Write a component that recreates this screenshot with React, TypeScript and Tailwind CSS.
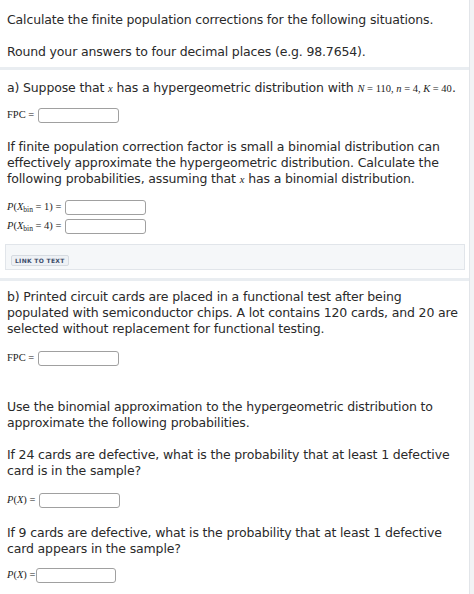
import React from "react";

const font = { fontFamily: '"DejaVu Sans", Verdana, sans-serif' };

function Box({ w = 81 }: { w?: number }) {
  return (
    <span
      className="inline-block h-[15px] shrink-0 rounded-[3px] border border-[#a0a0a0] bg-white"
      style={{ width: w }}
    />
  );
}

function M({ children }: { children: React.ReactNode }) {
  return (
    <span
      className="text-[10.5px] leading-none tracking-normal text-[#222]"
      style={{ fontFamily: '"Liberation Serif", "Times New Roman", serif' }}
    >
      {children}
    </span>
  );
}

export default function App() {
  return (
    <div className="flex min-h-[594px] w-[474px] bg-[#f2f3f5]" style={font}>
      <div className="flex w-[470px] flex-col gap-[3px] border-r border-[#e2e5e9] bg-[#e9edf1] text-[12.5px] leading-[16px] tracking-[-0.15px] text-[#2a2a2a]">
        <div className="h-[67px] bg-white px-[7px] pt-[12px]">
          <p>Calculate the finite population corrections for the following situations.</p>
          <p className="mt-[16px]">Round your answers to four decimal places (e.g. 98.7654).</p>
        </div>
        <div className="bg-white px-[7px] pt-[10px] pb-[8px]">
          <p className="h-[16px] whitespace-nowrap">
            a) Suppose that <M><i>x</i></M> has a hypergeometric distribution with{" "}
            <M>
              <i>N</i> = 110, <i>n</i> = 4, <i>K</i> = 40
            </M>
            .
          </p>
          <div className="mt-[12px] flex h-[15px] items-center gap-[4px]">
            <M>FPC =</M>
            <Box w={81} />
          </div>
          <p className="mt-[16px]">
            If finite population correction factor is small a binomial distribution can effectively approximate the
            hypergeometric distribution. Calculate the following probabilities, assuming that{" "}
            <M>
              <i>x</i>
            </M>{" "}
            has a binomial distribution.
          </p>
          <div className="mt-[13px] flex h-[15px] items-center gap-[4px]">
            <M>
              <i>P</i>(<i>X</i>
              <sub className="text-[7.5px] leading-none">bin</sub> = 1) =
            </M>
            <Box w={81} />
          </div>
          <div className="mt-[4px] flex h-[15px] items-center gap-[4px]">
            <M>
              <i>P</i>(<i>X</i>
              <sub className="text-[7.5px] leading-none">bin</sub> = 4) =
            </M>
            <Box w={81} />
          </div>
          <div className="mt-[10px] ml-[-2px] mr-[-3px] h-[26px] border border-[#e1e5ea] bg-[#f5f7f9] pl-[5px] pt-[6px]">
            <span className="inline-block rounded-[2px] border border-[#d6dbe1] bg-[#eef1f5] px-[3px] text-[6px] font-bold leading-[9px] tracking-[0.3px] text-[#3c4b6a]">
              LINK TO TEXT
            </span>
          </div>
        </div>
        <div className="flex-1 bg-white px-[7px] pt-[8px]">
          <p>
            b) Printed circuit cards are placed in a functional test after being populated with semiconductor chips. A
            lot contains 120 cards, and 20 are selected without replacement for functional testing.
          </p>
          <div className="mt-[14px] flex h-[15px] items-center gap-[4px]">
            <M>FPC =</M>
            <Box w={81} />
          </div>
          <p className="mt-[33px]">
            Use the binomial approximation to the hypergeometric distribution to approximate the following
            probabilities.
          </p>
          <p className="mt-[16px]">
            If 24 cards are defective, what is the probability that at least 1 defective card is in the sample?
          </p>
          <div className="mt-[14px] flex h-[15px] items-center gap-[4px]">
            <M>
              <i>P</i>(<i>X</i>) =
            </M>
            <Box w={81} />
          </div>
          <p className="mt-[17px]">
            If 9 cards are defective, what is the probability that at least 1 defective card appears in the sample?
          </p>
          <div className="mt-[11px] flex h-[15px] items-center gap-[1px]">
            <M>
              <i>P</i>(<i>X</i>) =
            </M>
            <Box w={80} />
          </div>
        </div>
      </div>
    </div>
  );
}
